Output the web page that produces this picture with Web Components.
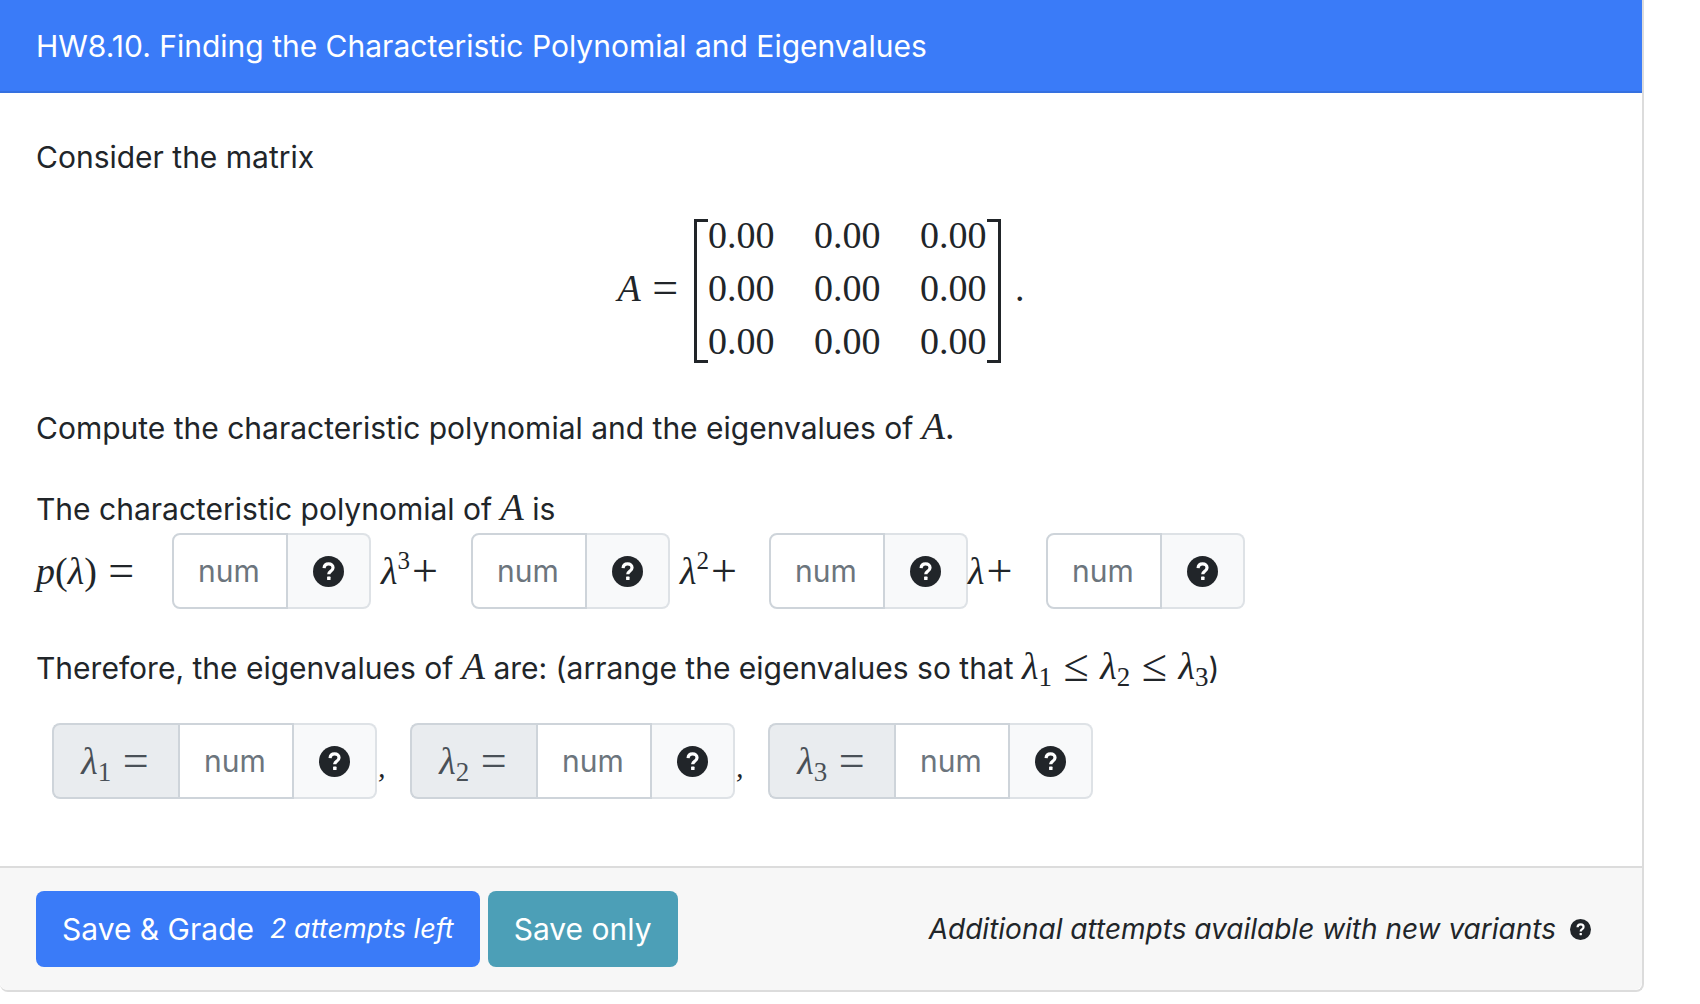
<!DOCTYPE html>
<html lang="en">
<head>
<meta charset="utf-8">
<title>HW8.10</title>
<style>
  html, body { margin: 0; background: #fff; }
  body { font-family: Inter, "Liberation Sans", sans-serif; font-size: 30px; line-height: 48px; color: #212529; }
</style>
</head>
<body>
<hw-card>
  <span slot="header">HW8.10. Finding the Characteristic Polynomial and Eigenvalues</span>

  <hw-line>Consider the matrix</hw-line>

  <hw-display>
    <hw-math><i>A</i> <hw-rel>=</hw-rel></hw-math>
    <hw-matrix>
      <span>0.00</span><span>0.00</span><span>0.00</span>
      <span>0.00</span><span>0.00</span><span>0.00</span>
      <span>0.00</span><span>0.00</span><span>0.00</span>
    </hw-matrix>
    <hw-math>.</hw-math>
  </hw-display>

  <hw-line gap="31">Compute the characteristic polynomial and the eigenvalues of <hw-math><i>A</i>.</hw-math></hw-line>

  <hw-line>The characteristic polynomial of <hw-math><i>A</i></hw-math> is</hw-line>

  <hw-row>
    <hw-math style="width:136px"><i>p</i>(<i>λ</i>) <hw-rel>=</hw-rel></hw-math>
    <hw-num></hw-num>
    <hw-math style="width:90px;padding-left:10px"><i>λ</i><sup>3</sup><hw-rel>+</hw-rel></hw-math>
    <hw-num></hw-num>
    <hw-math style="width:89px;padding-left:10px"><i>λ</i><sup>2</sup><hw-rel>+</hw-rel></hw-math>
    <hw-num></hw-num>
    <hw-math style="width:78px"><i>λ</i><hw-rel>+</hw-rel></hw-math>
    <hw-num></hw-num>
  </hw-row>

  <hw-line top="33" gap="31">Therefore, the eigenvalues of <hw-math><i>A</i></hw-math> are: (arrange the eigenvalues so that <hw-math><i>λ</i><sub>1</sub> <hw-rel>≤</hw-rel> <i>λ</i><sub>2</sub> <hw-rel>≤</hw-rel> <i>λ</i><sub>3</sub></hw-math>)</hw-line>

  <hw-row indent="16">
    <hw-num labelled><hw-math slot="prefix"><i>λ</i><sub>1</sub> <hw-rel>=</hw-rel></hw-math></hw-num>
    <hw-comma>,</hw-comma>
    <hw-num labelled><hw-math slot="prefix"><i>λ</i><sub>2</sub> <hw-rel>=</hw-rel></hw-math></hw-num>
    <hw-comma>,</hw-comma>
    <hw-num labelled><hw-math slot="prefix"><i>λ</i><sub>3</sub> <hw-rel>=</hw-rel></hw-math></hw-num>
  </hw-row>

  <hw-btn slot="actions" kind="primary">Save &amp; Grade <small>2 attempts left</small></hw-btn>
  <hw-btn slot="actions" kind="info">Save only</hw-btn>
  <span slot="note">Additional attempts available with new variants</span>
</hw-card>

<script>
const helpIcon = (size) => `
  <svg width="${size}" height="${size}" viewBox="0 0 24 24" aria-hidden="true">
    <circle cx="12" cy="12" r="12" fill="#212529"/>
    <path d="M8.6 9.4c.1-2 1.5-3.3 3.5-3.3s3.4 1.2 3.4 2.9c0 1.3-.7 2-1.8 2.8-1 .7-1.5 1.2-1.5 2.4" fill="none" stroke="#fff" stroke-width="2.5"/>
    <rect x="10.9" y="15.9" width="2.7" height="2.7" rx=".5" fill="#fff"/>
  </svg>`;

// Card with blue title bar, body and grey footer
class HwCard extends HTMLElement {
  constructor() {
    super();
    this.attachShadow({ mode: "open" });
    this.shadowRoot.innerHTML = `
      <style>
        :host { display: block; width: 1644px; box-sizing: border-box; border-right: 2px solid #dcdcdc; border-bottom: 2px solid #dcdcdc; border-radius: 0 0 8px 8px; }
        header { height: 91px; box-sizing: content-box; padding: 0 36px; display: flex; align-items: center; background: #3a7bf8; border-bottom: 2px solid #3570e0; color: #fff; }
        main { padding: 40px 36px 0; height: 773px; box-sizing: border-box; }
        footer { display: flex; justify-content: space-between; align-items: center; height: 124px; box-sizing: border-box; padding: 0 51px 0 36px; background: #f7f7f7; border-top: 2px solid #dcdcdc; border-radius: 0 0 8px 8px; }
        .actions { display: flex; gap: 8px; }
        .note { display: flex; align-items: center; gap: 14px; font-style: italic; font-size: 28px; }
        .note svg { display: block; }
      </style>
      <header><slot name="header"></slot></header>
      <main><slot></slot></main>
      <footer>
        <div class="actions"><slot name="actions"></slot></div>
        <div class="note"><slot name="note"></slot>${helpIcon(21)}</div>
      </footer>`;
  }
}

// One paragraph of running text
class HwLine extends HTMLElement {
  constructor() {
    super();
    this.attachShadow({ mode: "open" });
    this.shadowRoot.innerHTML = `
      <style>:host { display: block; white-space: nowrap; }</style>
      <slot></slot>`;
  }
  connectedCallback() {
    if (this.hasAttribute("top")) this.style.marginTop = this.getAttribute("top") + "px";
    if (this.hasAttribute("gap")) this.style.marginBottom = this.getAttribute("gap") + "px";
  }
}

// Math in a serif face
class HwMath extends HTMLElement {
  constructor() {
    super();
    this.attachShadow({ mode: "open" });
    this.shadowRoot.innerHTML = `
      <style>
        :host { display: inline-block; font-family: "Liberation Serif", serif; font-size: 38px; white-space: nowrap; flex: none; }
        ::slotted(sup) { font-size: 25px; line-height: 0; vertical-align: 15px; }
        ::slotted(sub) { font-size: 27px; line-height: 0; vertical-align: -7px; }
      </style>
      <slot></slot>`;
  }
}

// Relation signs are wider than the serif face gives them
class HwRel extends HTMLElement {
  constructor() {
    super();
    this.attachShadow({ mode: "open" });
    this.shadowRoot.innerHTML = `
      <style>:host { display: inline-block; font-size: 46px; line-height: 0; font-weight: 400; padding: 0 2px; vertical-align: -2px; }</style>
      <slot></slot>`;
  }
}

// Centered display equation
class HwDisplay extends HTMLElement {
  constructor() {
    super();
    this.attachShadow({ mode: "open" });
    this.shadowRoot.innerHTML = `
      <style>:host { display: flex; align-items: center; justify-content: center; gap: 14px; margin: 28px 0 34px; line-height: 53px; }</style>
      <slot></slot>`;
  }
}

// 3x3 matrix with square brackets
class HwMatrix extends HTMLElement {
  constructor() {
    super();
    this.attachShadow({ mode: "open" });
    this.shadowRoot.innerHTML = `
      <style>
        :host { display: flex; align-items: center; font-family: "Liberation Serif", serif; font-size: 38px; line-height: 53px; }
        .grid { display: grid; grid-template-columns: repeat(3, 67px); column-gap: 39px; }
        .br { width: 11px; height: 138px; margin-top: 4px; border: 3px solid #212529; }
        .l { border-right: 0; }
        .r { border-left: 0; }
      </style>
      <div class="br l"></div>
      <div class="grid"><slot></slot></div>
      <div class="br r"></div>`;
  }
}

// Row of inputs and math
class HwRow extends HTMLElement {
  constructor() {
    super();
    this.attachShadow({ mode: "open" });
    this.shadowRoot.innerHTML = `
      <style>:host { display: flex; align-items: center; }</style>
      <slot></slot>`;
  }
  connectedCallback() {
    if (this.hasAttribute("indent")) this.style.paddingLeft = this.getAttribute("indent") + "px";
  }
}

// Number input with help button and optional label
class HwNum extends HTMLElement {
  constructor() {
    super();
    this.attachShadow({ mode: "open" });
    this.shadowRoot.innerHTML = `
      <style>
        :host { display: flex; height: 76px; flex: none; }
        .pre { display: none; width: 126px; box-sizing: border-box; align-items: center; justify-content: center; background: #e9ecef; color: #495057; border: 2px solid #ced4da; border-right: 0; border-radius: 8px 0 0 8px; }
        :host([labelled]) .pre { display: flex; }
        input { width: 116px; height: 76px; box-sizing: border-box; margin: 0; padding: 0 24px; border: 2px solid #ced4da; border-radius: 8px 0 0 8px; font: inherit; background: #fff; outline: 0; }
        :host([labelled]) input { border-radius: 0; }
        input::placeholder { color: #6c757d; opacity: 1; }
        .help { width: 83px; box-sizing: border-box; display: flex; align-items: center; justify-content: center; background: #f8f9fa; border: 2px solid #dee2e6; border-left: 0; border-radius: 0 8px 8px 0; }
        svg { display: block; }
      </style>
      <div class="pre"><slot name="prefix"></slot></div>
      <input type="text" placeholder="num">
      <div class="help">${helpIcon(31)}</div>`;
  }
}

// Comma between the eigenvalue boxes
class HwComma extends HTMLElement {
  constructor() {
    super();
    this.attachShadow({ mode: "open" });
    this.shadowRoot.innerHTML = `
      <style>:host { display: block; width: 33px; padding-top: 12px; font-family: "Liberation Serif", serif; font-style: italic; font-size: 30px; text-indent: 1px; flex: none; }</style>
      <slot></slot>`;
  }
}

// Footer button
class HwBtn extends HTMLElement {
  constructor() {
    super();
    this.attachShadow({ mode: "open" });
    this.shadowRoot.innerHTML = `
      <style>
        :host { display: flex; align-items: center; height: 76px; box-sizing: border-box; padding: 0 26px; border-radius: 8px; color: #fff; white-space: nowrap; }
        :host([kind="primary"]) { background: #3a7bf8; }
        :host([kind="info"]) { background: #4c9fb7; }
        ::slotted(small) { font-size: 27px; font-style: italic; margin-left: 16px; }
      </style>
      <slot></slot>`;
  }
}

customElements.define("hw-card", HwCard);
customElements.define("hw-line", HwLine);
customElements.define("hw-math", HwMath);
customElements.define("hw-rel", HwRel);
customElements.define("hw-display", HwDisplay);
customElements.define("hw-matrix", HwMatrix);
customElements.define("hw-row", HwRow);
customElements.define("hw-num", HwNum);
customElements.define("hw-comma", HwComma);
customElements.define("hw-btn", HwBtn);
</script>
</body>
</html>
